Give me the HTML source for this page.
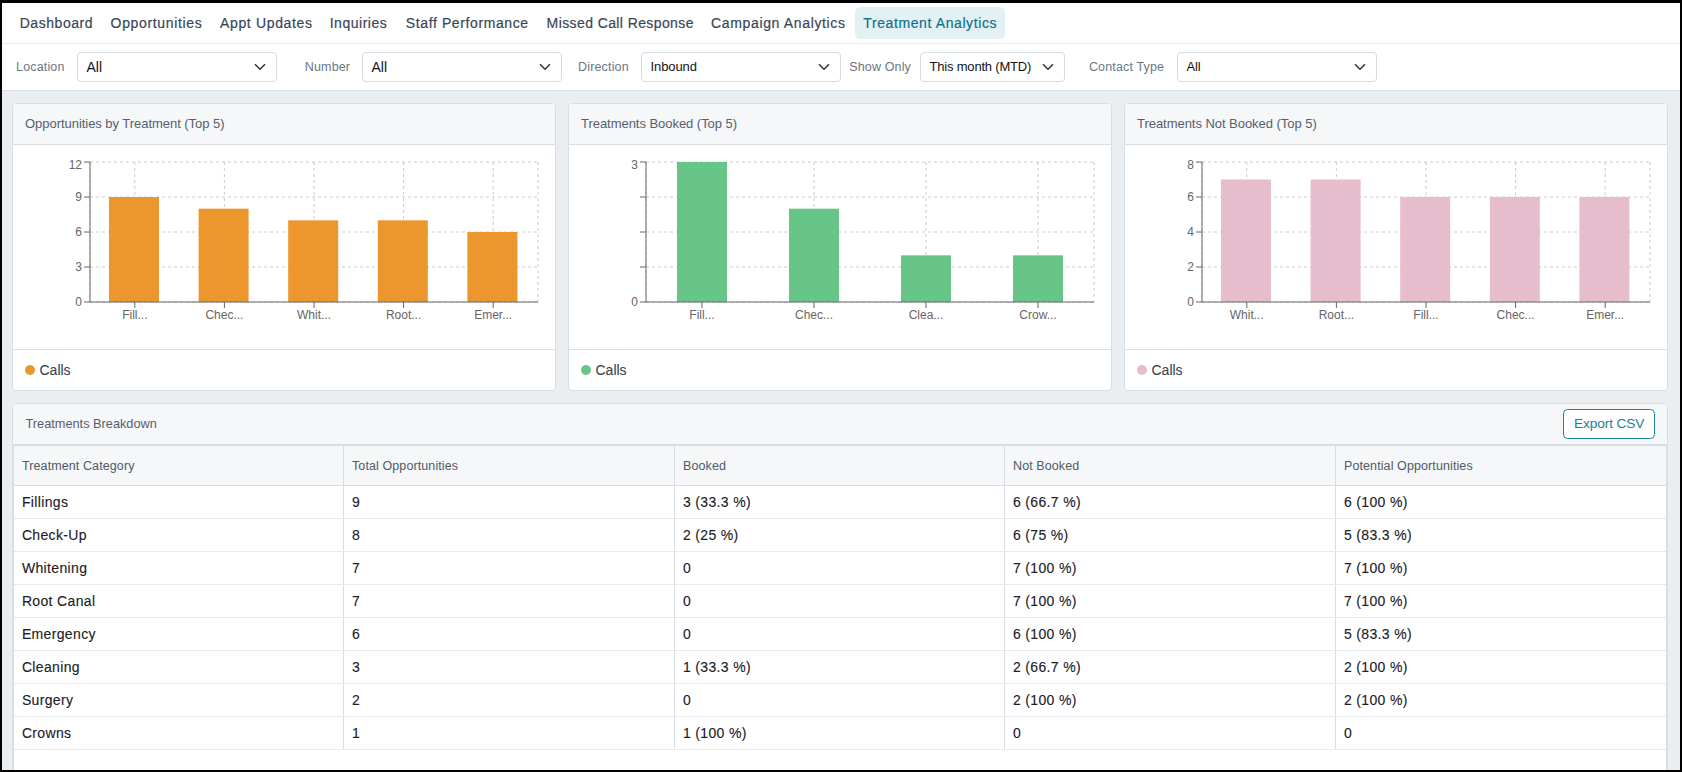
<!DOCTYPE html>
<html><head><meta charset="utf-8"><title>Treatment Analytics</title>
<style>
html,body{margin:0;padding:0;}
body{width:1682px;height:772px;background:#000;position:relative;overflow:hidden;font-family:"Liberation Sans",sans-serif;}
div,span{box-sizing:border-box;}
.a{position:absolute;}
.t{position:absolute;white-space:nowrap;line-height:1;}
.s{-webkit-text-stroke:0.2px currentColor;}
.s1{-webkit-text-stroke:0.12px currentColor;}
</style></head>
<body>
<div class="a" style="left:2px;top:3px;width:1678px;height:767px;background:#eaeef1;"></div>
<div class="a" style="left:2px;top:3px;width:1678px;height:40px;background:#fff;"></div>
<div class="a" style="left:2px;top:43px;width:1678px;height:1px;background:#e8ebef;"></div>
<div class="a" style="left:855px;top:7px;width:150px;height:31.5px;background:#e3f1f5;border-radius:5px;"></div>
<span class="t s" style="left:19.7px;top:16.35px;font-size:14px;color:#3a4656;letter-spacing:0.55px;">Dashboard</span>
<span class="t s" style="left:110.60000000000001px;top:16.35px;font-size:14px;color:#3a4656;letter-spacing:0.65px;">Opportunities</span>
<span class="t s" style="left:220.0px;top:16.35px;font-size:14px;color:#3a4656;letter-spacing:0.65px;">Appt Updates</span>
<span class="t s" style="left:329.7px;top:16.35px;font-size:14px;color:#3a4656;letter-spacing:0.52px;">Inquiries</span>
<span class="t s" style="left:405.8px;top:16.35px;font-size:14px;color:#3a4656;letter-spacing:0.61px;">Staff Performance</span>
<span class="t s" style="left:546.6px;top:16.35px;font-size:14px;color:#3a4656;letter-spacing:0.4px;">Missed Call Response</span>
<span class="t s" style="left:711.0px;top:16.35px;font-size:14px;color:#3a4656;letter-spacing:0.65px;">Campaign Analytics</span>
<span class="t s" style="left:863.3000000000001px;top:16.35px;font-size:14px;color:#0f7189;letter-spacing:0.6px;">Treatment Analytics</span>
<div class="a" style="left:2px;top:44px;width:1678px;height:46px;background:#fff;"></div>
<div class="a" style="left:2px;top:90px;width:1678px;height:1px;background:#d8dee6;"></div>
<span class="t " style="left:16.1px;top:61.12px;font-size:12.5px;color:#6b7785;letter-spacing:0.15px;">Location</span>
<div class="a" style="left:77px;top:52px;width:200px;height:30px;background:#fff;border:1px solid #d5dbe3;border-radius:4px;"></div>
<span class="t " style="left:86.5px;top:59.65px;font-size:14px;color:#111418;">All</span>
<svg class="a" style="left:254px;top:63px" width="12" height="8" viewBox="0 0 12 8"><path d="M1 1.2 L6 6.2 L11 1.2" fill="none" stroke="#333" stroke-width="1.5"/></svg>
<span class="t " style="left:304.8px;top:61.12px;font-size:12.5px;color:#6b7785;letter-spacing:0.15px;">Number</span>
<div class="a" style="left:362px;top:52px;width:200px;height:30px;background:#fff;border:1px solid #d5dbe3;border-radius:4px;"></div>
<span class="t " style="left:371.5px;top:59.65px;font-size:14px;color:#111418;">All</span>
<svg class="a" style="left:539px;top:63px" width="12" height="8" viewBox="0 0 12 8"><path d="M1 1.2 L6 6.2 L11 1.2" fill="none" stroke="#333" stroke-width="1.5"/></svg>
<span class="t " style="left:578.1px;top:61.12px;font-size:12.5px;color:#6b7785;letter-spacing:0.15px;">Direction</span>
<div class="a" style="left:641px;top:52px;width:200px;height:30px;background:#fff;border:1px solid #d5dbe3;border-radius:4px;"></div>
<span class="t " style="left:650.5px;top:60.20px;font-size:13px;color:#111418;letter-spacing:-0.1px;">Inbound</span>
<svg class="a" style="left:818px;top:63px" width="12" height="8" viewBox="0 0 12 8"><path d="M1 1.2 L6 6.2 L11 1.2" fill="none" stroke="#333" stroke-width="1.5"/></svg>
<span class="t " style="left:849.2px;top:61.12px;font-size:12.5px;color:#6b7785;letter-spacing:0.15px;">Show Only</span>
<div class="a" style="left:920px;top:52px;width:145px;height:30px;background:#fff;border:1px solid #d5dbe3;border-radius:4px;"></div>
<span class="t " style="left:929.5px;top:60.20px;font-size:13px;color:#111418;letter-spacing:-0.19px;">This month (MTD)</span>
<svg class="a" style="left:1042px;top:63px" width="12" height="8" viewBox="0 0 12 8"><path d="M1 1.2 L6 6.2 L11 1.2" fill="none" stroke="#333" stroke-width="1.5"/></svg>
<span class="t " style="left:1088.9px;top:61.12px;font-size:12.5px;color:#6b7785;letter-spacing:0.15px;">Contact Type</span>
<div class="a" style="left:1177px;top:52px;width:200px;height:30px;background:#fff;border:1px solid #d5dbe3;border-radius:4px;"></div>
<span class="t " style="left:1186.5px;top:60.20px;font-size:13px;color:#111418;letter-spacing:-0.1px;">All</span>
<svg class="a" style="left:1354px;top:63px" width="12" height="8" viewBox="0 0 12 8"><path d="M1 1.2 L6 6.2 L11 1.2" fill="none" stroke="#333" stroke-width="1.5"/></svg>
<div class="a" style="left:12px;top:103px;width:544px;height:288px;background:#fff;border:1px solid #d8dee6;border-radius:4px;overflow:hidden;"></div>
<div class="a" style="left:13px;top:104px;width:542px;height:40px;background:#f6f7f9;border-radius:3px 3px 0 0;"></div>
<div class="a" style="left:13px;top:144px;width:542px;height:1px;background:#d8dee6;"></div>
<div class="a" style="left:13px;top:349px;width:542px;height:1px;background:#d8dee6;"></div>
<span class="t " style="left:25px;top:116.80px;font-size:13px;color:#55606e;letter-spacing:-0.04px;">Opportunities by Treatment (Top 5)</span>
<svg class="a" style="left:0;top:0" width="1682" height="772" viewBox="0 0 1682 772"><line x1="90" y1="302.00" x2="538" y2="302.00" stroke="#cccccc" stroke-dasharray="3 3"/><line x1="90" y1="267.00" x2="538" y2="267.00" stroke="#cccccc" stroke-dasharray="3 3"/><line x1="90" y1="232.00" x2="538" y2="232.00" stroke="#cccccc" stroke-dasharray="3 3"/><line x1="90" y1="197.00" x2="538" y2="197.00" stroke="#cccccc" stroke-dasharray="3 3"/><line x1="90" y1="162.00" x2="538" y2="162.00" stroke="#cccccc" stroke-dasharray="3 3"/><line x1="134.80" y1="162" x2="134.80" y2="302" stroke="#cccccc" stroke-dasharray="3 3"/><line x1="224.40" y1="162" x2="224.40" y2="302" stroke="#cccccc" stroke-dasharray="3 3"/><line x1="314.00" y1="162" x2="314.00" y2="302" stroke="#cccccc" stroke-dasharray="3 3"/><line x1="403.60" y1="162" x2="403.60" y2="302" stroke="#cccccc" stroke-dasharray="3 3"/><line x1="493.20" y1="162" x2="493.20" y2="302" stroke="#cccccc" stroke-dasharray="3 3"/><line x1="538" y1="162" x2="538" y2="302" stroke="#cccccc" stroke-dasharray="3 3"/><line x1="90" y1="162" x2="90" y2="302" stroke="#cccccc" stroke-dasharray="3 3"/><rect x="109.00" y="197.00" width="50" height="105.00" fill="#ec962e"/><rect x="198.60" y="208.67" width="50" height="93.33" fill="#ec962e"/><rect x="288.20" y="220.33" width="50" height="81.67" fill="#ec962e"/><rect x="377.80" y="220.33" width="50" height="81.67" fill="#ec962e"/><rect x="467.40" y="232.00" width="50" height="70.00" fill="#ec962e"/><line x1="90" y1="162" x2="90" y2="302" stroke="#666" stroke-width="1"/><line x1="90" y1="302" x2="538" y2="302" stroke="#666" stroke-width="1"/><line x1="84" y1="302.00" x2="90" y2="302.00" stroke="#666" stroke-width="1"/><line x1="84" y1="267.00" x2="90" y2="267.00" stroke="#666" stroke-width="1"/><line x1="84" y1="232.00" x2="90" y2="232.00" stroke="#666" stroke-width="1"/><line x1="84" y1="197.00" x2="90" y2="197.00" stroke="#666" stroke-width="1"/><line x1="84" y1="162.00" x2="90" y2="162.00" stroke="#666" stroke-width="1"/><line x1="134.80" y1="302" x2="134.80" y2="308" stroke="#666" stroke-width="1"/><line x1="224.40" y1="302" x2="224.40" y2="308" stroke="#666" stroke-width="1"/><line x1="314.00" y1="302" x2="314.00" y2="308" stroke="#666" stroke-width="1"/><line x1="403.60" y1="302" x2="403.60" y2="308" stroke="#666" stroke-width="1"/><line x1="493.20" y1="302" x2="493.20" y2="308" stroke="#666" stroke-width="1"/></svg>
<span class="t" style="left:-118px;width:200px;text-align:right;top:295.84px;font-size:12px;color:#666;">0</span>
<span class="t" style="left:-118px;width:200px;text-align:right;top:260.84px;font-size:12px;color:#666;">3</span>
<span class="t" style="left:-118px;width:200px;text-align:right;top:225.84px;font-size:12px;color:#666;">6</span>
<span class="t" style="left:-118px;width:200px;text-align:right;top:190.84px;font-size:12px;color:#666;">9</span>
<span class="t" style="left:-118px;width:200px;text-align:right;top:158.74px;font-size:12px;color:#666;">12</span>
<span class="t" style="left:-65.19999999999999px;width:400px;text-align:center;top:308.84px;font-size:12px;color:#666;">Fill...</span>
<span class="t" style="left:24.399999999999977px;width:400px;text-align:center;top:308.84px;font-size:12px;color:#666;">Chec...</span>
<span class="t" style="left:114.0px;width:400px;text-align:center;top:308.84px;font-size:12px;color:#666;">Whit...</span>
<span class="t" style="left:203.59999999999997px;width:400px;text-align:center;top:308.84px;font-size:12px;color:#666;">Root...</span>
<span class="t" style="left:293.2px;width:400px;text-align:center;top:308.84px;font-size:12px;color:#666;">Emer...</span>
<div class="a" style="left:25px;top:365px;width:10px;height:10px;border-radius:50%;background:#ec962e;"></div>
<span class="t s1" style="left:39.5px;top:363.15px;font-size:14px;color:#3a4656;">Calls</span>
<div class="a" style="left:568px;top:103px;width:544px;height:288px;background:#fff;border:1px solid #d8dee6;border-radius:4px;overflow:hidden;"></div>
<div class="a" style="left:569px;top:104px;width:542px;height:40px;background:#f6f7f9;border-radius:3px 3px 0 0;"></div>
<div class="a" style="left:569px;top:144px;width:542px;height:1px;background:#d8dee6;"></div>
<div class="a" style="left:569px;top:349px;width:542px;height:1px;background:#d8dee6;"></div>
<span class="t " style="left:581px;top:116.80px;font-size:13px;color:#55606e;letter-spacing:-0.04px;">Treatments Booked (Top 5)</span>
<svg class="a" style="left:0;top:0" width="1682" height="772" viewBox="0 0 1682 772"><line x1="646" y1="302.00" x2="1094" y2="302.00" stroke="#cccccc" stroke-dasharray="3 3"/><line x1="646" y1="267.00" x2="1094" y2="267.00" stroke="#cccccc" stroke-dasharray="3 3"/><line x1="646" y1="232.00" x2="1094" y2="232.00" stroke="#cccccc" stroke-dasharray="3 3"/><line x1="646" y1="197.00" x2="1094" y2="197.00" stroke="#cccccc" stroke-dasharray="3 3"/><line x1="646" y1="162.00" x2="1094" y2="162.00" stroke="#cccccc" stroke-dasharray="3 3"/><line x1="702.00" y1="162" x2="702.00" y2="302" stroke="#cccccc" stroke-dasharray="3 3"/><line x1="814.00" y1="162" x2="814.00" y2="302" stroke="#cccccc" stroke-dasharray="3 3"/><line x1="926.00" y1="162" x2="926.00" y2="302" stroke="#cccccc" stroke-dasharray="3 3"/><line x1="1038.00" y1="162" x2="1038.00" y2="302" stroke="#cccccc" stroke-dasharray="3 3"/><line x1="1094" y1="162" x2="1094" y2="302" stroke="#cccccc" stroke-dasharray="3 3"/><line x1="646" y1="162" x2="646" y2="302" stroke="#cccccc" stroke-dasharray="3 3"/><rect x="677.00" y="162.00" width="50" height="140.00" fill="#67c587"/><rect x="789.00" y="208.67" width="50" height="93.33" fill="#67c587"/><rect x="901.00" y="255.33" width="50" height="46.67" fill="#67c587"/><rect x="1013.00" y="255.33" width="50" height="46.67" fill="#67c587"/><line x1="646" y1="162" x2="646" y2="302" stroke="#666" stroke-width="1"/><line x1="646" y1="302" x2="1094" y2="302" stroke="#666" stroke-width="1"/><line x1="640" y1="302.00" x2="646" y2="302.00" stroke="#666" stroke-width="1"/><line x1="640" y1="267.00" x2="646" y2="267.00" stroke="#666" stroke-width="1"/><line x1="640" y1="232.00" x2="646" y2="232.00" stroke="#666" stroke-width="1"/><line x1="640" y1="197.00" x2="646" y2="197.00" stroke="#666" stroke-width="1"/><line x1="640" y1="162.00" x2="646" y2="162.00" stroke="#666" stroke-width="1"/><line x1="702.00" y1="302" x2="702.00" y2="308" stroke="#666" stroke-width="1"/><line x1="814.00" y1="302" x2="814.00" y2="308" stroke="#666" stroke-width="1"/><line x1="926.00" y1="302" x2="926.00" y2="308" stroke="#666" stroke-width="1"/><line x1="1038.00" y1="302" x2="1038.00" y2="308" stroke="#666" stroke-width="1"/></svg>
<span class="t" style="left:438px;width:200px;text-align:right;top:295.84px;font-size:12px;color:#666;">0</span>
<span class="t" style="left:438px;width:200px;text-align:right;top:158.74px;font-size:12px;color:#666;">3</span>
<span class="t" style="left:502.0px;width:400px;text-align:center;top:308.84px;font-size:12px;color:#666;">Fill...</span>
<span class="t" style="left:614.0px;width:400px;text-align:center;top:308.84px;font-size:12px;color:#666;">Chec...</span>
<span class="t" style="left:726.0px;width:400px;text-align:center;top:308.84px;font-size:12px;color:#666;">Clea...</span>
<span class="t" style="left:838.0px;width:400px;text-align:center;top:308.84px;font-size:12px;color:#666;">Crow...</span>
<div class="a" style="left:581px;top:365px;width:10px;height:10px;border-radius:50%;background:#67c587;"></div>
<span class="t s1" style="left:595.5px;top:363.15px;font-size:14px;color:#3a4656;">Calls</span>
<div class="a" style="left:1124px;top:103px;width:544px;height:288px;background:#fff;border:1px solid #d8dee6;border-radius:4px;overflow:hidden;"></div>
<div class="a" style="left:1125px;top:104px;width:542px;height:40px;background:#f6f7f9;border-radius:3px 3px 0 0;"></div>
<div class="a" style="left:1125px;top:144px;width:542px;height:1px;background:#d8dee6;"></div>
<div class="a" style="left:1125px;top:349px;width:542px;height:1px;background:#d8dee6;"></div>
<span class="t " style="left:1137px;top:116.80px;font-size:13px;color:#55606e;letter-spacing:-0.04px;">Treatments Not Booked (Top 5)</span>
<svg class="a" style="left:0;top:0" width="1682" height="772" viewBox="0 0 1682 772"><line x1="1202" y1="302.00" x2="1650" y2="302.00" stroke="#cccccc" stroke-dasharray="3 3"/><line x1="1202" y1="267.00" x2="1650" y2="267.00" stroke="#cccccc" stroke-dasharray="3 3"/><line x1="1202" y1="232.00" x2="1650" y2="232.00" stroke="#cccccc" stroke-dasharray="3 3"/><line x1="1202" y1="197.00" x2="1650" y2="197.00" stroke="#cccccc" stroke-dasharray="3 3"/><line x1="1202" y1="162.00" x2="1650" y2="162.00" stroke="#cccccc" stroke-dasharray="3 3"/><line x1="1246.80" y1="162" x2="1246.80" y2="302" stroke="#cccccc" stroke-dasharray="3 3"/><line x1="1336.40" y1="162" x2="1336.40" y2="302" stroke="#cccccc" stroke-dasharray="3 3"/><line x1="1426.00" y1="162" x2="1426.00" y2="302" stroke="#cccccc" stroke-dasharray="3 3"/><line x1="1515.60" y1="162" x2="1515.60" y2="302" stroke="#cccccc" stroke-dasharray="3 3"/><line x1="1605.20" y1="162" x2="1605.20" y2="302" stroke="#cccccc" stroke-dasharray="3 3"/><line x1="1650" y1="162" x2="1650" y2="302" stroke="#cccccc" stroke-dasharray="3 3"/><line x1="1202" y1="162" x2="1202" y2="302" stroke="#cccccc" stroke-dasharray="3 3"/><rect x="1221.00" y="179.50" width="50" height="122.50" fill="#e5bdcd"/><rect x="1310.60" y="179.50" width="50" height="122.50" fill="#e5bdcd"/><rect x="1400.20" y="197.00" width="50" height="105.00" fill="#e5bdcd"/><rect x="1489.80" y="197.00" width="50" height="105.00" fill="#e5bdcd"/><rect x="1579.40" y="197.00" width="50" height="105.00" fill="#e5bdcd"/><line x1="1202" y1="162" x2="1202" y2="302" stroke="#666" stroke-width="1"/><line x1="1202" y1="302" x2="1650" y2="302" stroke="#666" stroke-width="1"/><line x1="1196" y1="302.00" x2="1202" y2="302.00" stroke="#666" stroke-width="1"/><line x1="1196" y1="267.00" x2="1202" y2="267.00" stroke="#666" stroke-width="1"/><line x1="1196" y1="232.00" x2="1202" y2="232.00" stroke="#666" stroke-width="1"/><line x1="1196" y1="197.00" x2="1202" y2="197.00" stroke="#666" stroke-width="1"/><line x1="1196" y1="162.00" x2="1202" y2="162.00" stroke="#666" stroke-width="1"/><line x1="1246.80" y1="302" x2="1246.80" y2="308" stroke="#666" stroke-width="1"/><line x1="1336.40" y1="302" x2="1336.40" y2="308" stroke="#666" stroke-width="1"/><line x1="1426.00" y1="302" x2="1426.00" y2="308" stroke="#666" stroke-width="1"/><line x1="1515.60" y1="302" x2="1515.60" y2="308" stroke="#666" stroke-width="1"/><line x1="1605.20" y1="302" x2="1605.20" y2="308" stroke="#666" stroke-width="1"/></svg>
<span class="t" style="left:994px;width:200px;text-align:right;top:295.84px;font-size:12px;color:#666;">0</span>
<span class="t" style="left:994px;width:200px;text-align:right;top:260.84px;font-size:12px;color:#666;">2</span>
<span class="t" style="left:994px;width:200px;text-align:right;top:225.84px;font-size:12px;color:#666;">4</span>
<span class="t" style="left:994px;width:200px;text-align:right;top:190.84px;font-size:12px;color:#666;">6</span>
<span class="t" style="left:994px;width:200px;text-align:right;top:158.74px;font-size:12px;color:#666;">8</span>
<span class="t" style="left:1046.8px;width:400px;text-align:center;top:308.84px;font-size:12px;color:#666;">Whit...</span>
<span class="t" style="left:1136.4px;width:400px;text-align:center;top:308.84px;font-size:12px;color:#666;">Root...</span>
<span class="t" style="left:1226.0px;width:400px;text-align:center;top:308.84px;font-size:12px;color:#666;">Fill...</span>
<span class="t" style="left:1315.6px;width:400px;text-align:center;top:308.84px;font-size:12px;color:#666;">Chec...</span>
<span class="t" style="left:1405.2px;width:400px;text-align:center;top:308.84px;font-size:12px;color:#666;">Emer...</span>
<div class="a" style="left:1137px;top:365px;width:10px;height:10px;border-radius:50%;background:#e5bdcd;"></div>
<span class="t s1" style="left:1151.5px;top:363.15px;font-size:14px;color:#3a4656;">Calls</span>
<div class="a" style="left:12px;top:403px;width:1656px;height:400px;background:#fff;border:1px solid #d8dee6;border-radius:4px;"></div>
<div class="a" style="left:13px;top:404px;width:1654px;height:40px;background:#f6f7f9;border-radius:3px 3px 0 0;"></div>
<div class="a" style="left:13px;top:444px;width:1654px;height:1px;background:#d8dee6;"></div>
<span class="t " style="left:25.5px;top:418.01px;font-size:12.75px;color:#55606e;">Treatments Breakdown</span>
<div class="a" style="left:1563px;top:409px;width:92px;height:30px;background:#fff;border:1px solid #1b889c;border-radius:4.5px;"></div>
<span class="t " style="left:1574px;top:416.50px;font-size:13.7px;color:#1a8196;letter-spacing:-0.12px;">Export CSV</span>
<div class="a" style="left:13px;top:445px;width:1px;height:330px;background:#d8dee6;"></div>
<div class="a" style="left:1666px;top:445px;width:1px;height:330px;background:#d8dee6;"></div>
<div class="a" style="left:14px;top:446px;width:1652px;height:39px;background:#f6f7f9;"></div>
<div class="a" style="left:13px;top:445px;width:1654px;height:1px;background:#d8dee6;"></div>
<div class="a" style="left:13px;top:485px;width:1654px;height:1px;background:#d8dee6;"></div>
<div class="a" style="left:343px;top:445px;width:1px;height:305px;background:#d8dee6;"></div>
<div class="a" style="left:674px;top:445px;width:1px;height:305px;background:#d8dee6;"></div>
<div class="a" style="left:1004px;top:445px;width:1px;height:305px;background:#d8dee6;"></div>
<div class="a" style="left:1335px;top:445px;width:1px;height:305px;background:#d8dee6;"></div>
<span class="t " style="left:22px;top:459.82px;font-size:12.5px;color:#4f5a67;letter-spacing:0.1px;">Treatment Category</span>
<span class="t " style="left:352px;top:459.82px;font-size:12.5px;color:#4f5a67;letter-spacing:0.1px;">Total Opportunities</span>
<span class="t " style="left:683px;top:459.82px;font-size:12.5px;color:#4f5a67;letter-spacing:0.1px;">Booked</span>
<span class="t " style="left:1013px;top:459.82px;font-size:12.5px;color:#4f5a67;letter-spacing:0.1px;">Not Booked</span>
<span class="t " style="left:1344px;top:459.82px;font-size:12.5px;color:#4f5a67;letter-spacing:0.1px;">Potential Opportunities</span>
<span class="t s1" style="left:21.9px;top:495.05px;font-size:14px;color:#1b2028;letter-spacing:0.35px;">Fillings</span>
<span class="t s1" style="left:351.9px;top:495.05px;font-size:14px;color:#1b2028;letter-spacing:0.35px;">9</span>
<span class="t s1" style="left:682.9px;top:495.05px;font-size:14px;color:#1b2028;letter-spacing:0.35px;">3 (33.3 %)</span>
<span class="t s1" style="left:1012.9px;top:495.05px;font-size:14px;color:#1b2028;letter-spacing:0.35px;">6 (66.7 %)</span>
<span class="t s1" style="left:1343.9px;top:495.05px;font-size:14px;color:#1b2028;letter-spacing:0.35px;">6 (100 %)</span>
<div class="a" style="left:14px;top:518px;width:1652px;height:1px;background:#e6e9ee;"></div>
<span class="t s1" style="left:21.9px;top:528.05px;font-size:14px;color:#1b2028;letter-spacing:0.35px;">Check-Up</span>
<span class="t s1" style="left:351.9px;top:528.05px;font-size:14px;color:#1b2028;letter-spacing:0.35px;">8</span>
<span class="t s1" style="left:682.9px;top:528.05px;font-size:14px;color:#1b2028;letter-spacing:0.35px;">2 (25 %)</span>
<span class="t s1" style="left:1012.9px;top:528.05px;font-size:14px;color:#1b2028;letter-spacing:0.35px;">6 (75 %)</span>
<span class="t s1" style="left:1343.9px;top:528.05px;font-size:14px;color:#1b2028;letter-spacing:0.35px;">5 (83.3 %)</span>
<div class="a" style="left:14px;top:551px;width:1652px;height:1px;background:#e6e9ee;"></div>
<span class="t s1" style="left:21.9px;top:561.05px;font-size:14px;color:#1b2028;letter-spacing:0.35px;">Whitening</span>
<span class="t s1" style="left:351.9px;top:561.05px;font-size:14px;color:#1b2028;letter-spacing:0.35px;">7</span>
<span class="t s1" style="left:682.9px;top:561.05px;font-size:14px;color:#1b2028;letter-spacing:0.35px;">0</span>
<span class="t s1" style="left:1012.9px;top:561.05px;font-size:14px;color:#1b2028;letter-spacing:0.35px;">7 (100 %)</span>
<span class="t s1" style="left:1343.9px;top:561.05px;font-size:14px;color:#1b2028;letter-spacing:0.35px;">7 (100 %)</span>
<div class="a" style="left:14px;top:584px;width:1652px;height:1px;background:#e6e9ee;"></div>
<span class="t s1" style="left:21.9px;top:594.05px;font-size:14px;color:#1b2028;letter-spacing:0.35px;">Root Canal</span>
<span class="t s1" style="left:351.9px;top:594.05px;font-size:14px;color:#1b2028;letter-spacing:0.35px;">7</span>
<span class="t s1" style="left:682.9px;top:594.05px;font-size:14px;color:#1b2028;letter-spacing:0.35px;">0</span>
<span class="t s1" style="left:1012.9px;top:594.05px;font-size:14px;color:#1b2028;letter-spacing:0.35px;">7 (100 %)</span>
<span class="t s1" style="left:1343.9px;top:594.05px;font-size:14px;color:#1b2028;letter-spacing:0.35px;">7 (100 %)</span>
<div class="a" style="left:14px;top:617px;width:1652px;height:1px;background:#e6e9ee;"></div>
<span class="t s1" style="left:21.9px;top:627.05px;font-size:14px;color:#1b2028;letter-spacing:0.35px;">Emergency</span>
<span class="t s1" style="left:351.9px;top:627.05px;font-size:14px;color:#1b2028;letter-spacing:0.35px;">6</span>
<span class="t s1" style="left:682.9px;top:627.05px;font-size:14px;color:#1b2028;letter-spacing:0.35px;">0</span>
<span class="t s1" style="left:1012.9px;top:627.05px;font-size:14px;color:#1b2028;letter-spacing:0.35px;">6 (100 %)</span>
<span class="t s1" style="left:1343.9px;top:627.05px;font-size:14px;color:#1b2028;letter-spacing:0.35px;">5 (83.3 %)</span>
<div class="a" style="left:14px;top:650px;width:1652px;height:1px;background:#e6e9ee;"></div>
<span class="t s1" style="left:21.9px;top:660.05px;font-size:14px;color:#1b2028;letter-spacing:0.35px;">Cleaning</span>
<span class="t s1" style="left:351.9px;top:660.05px;font-size:14px;color:#1b2028;letter-spacing:0.35px;">3</span>
<span class="t s1" style="left:682.9px;top:660.05px;font-size:14px;color:#1b2028;letter-spacing:0.35px;">1 (33.3 %)</span>
<span class="t s1" style="left:1012.9px;top:660.05px;font-size:14px;color:#1b2028;letter-spacing:0.35px;">2 (66.7 %)</span>
<span class="t s1" style="left:1343.9px;top:660.05px;font-size:14px;color:#1b2028;letter-spacing:0.35px;">2 (100 %)</span>
<div class="a" style="left:14px;top:683px;width:1652px;height:1px;background:#e6e9ee;"></div>
<span class="t s1" style="left:21.9px;top:693.05px;font-size:14px;color:#1b2028;letter-spacing:0.35px;">Surgery</span>
<span class="t s1" style="left:351.9px;top:693.05px;font-size:14px;color:#1b2028;letter-spacing:0.35px;">2</span>
<span class="t s1" style="left:682.9px;top:693.05px;font-size:14px;color:#1b2028;letter-spacing:0.35px;">0</span>
<span class="t s1" style="left:1012.9px;top:693.05px;font-size:14px;color:#1b2028;letter-spacing:0.35px;">2 (100 %)</span>
<span class="t s1" style="left:1343.9px;top:693.05px;font-size:14px;color:#1b2028;letter-spacing:0.35px;">2 (100 %)</span>
<div class="a" style="left:14px;top:716px;width:1652px;height:1px;background:#e6e9ee;"></div>
<span class="t s1" style="left:21.9px;top:726.05px;font-size:14px;color:#1b2028;letter-spacing:0.35px;">Crowns</span>
<span class="t s1" style="left:351.9px;top:726.05px;font-size:14px;color:#1b2028;letter-spacing:0.35px;">1</span>
<span class="t s1" style="left:682.9px;top:726.05px;font-size:14px;color:#1b2028;letter-spacing:0.35px;">1 (100 %)</span>
<span class="t s1" style="left:1012.9px;top:726.05px;font-size:14px;color:#1b2028;letter-spacing:0.35px;">0</span>
<span class="t s1" style="left:1343.9px;top:726.05px;font-size:14px;color:#1b2028;letter-spacing:0.35px;">0</span>
<div class="a" style="left:14px;top:749px;width:1652px;height:1px;background:#e6e9ee;"></div>
<div class="a" style="left:0px;top:0px;width:1682px;height:3px;background:#000;"></div>
<div class="a" style="left:0px;top:0px;width:2px;height:772px;background:#000;"></div>
<div class="a" style="left:1680px;top:0px;width:2px;height:772px;background:#000;"></div>
<div class="a" style="left:0px;top:770px;width:1682px;height:2px;background:#000;"></div>
</body></html>
